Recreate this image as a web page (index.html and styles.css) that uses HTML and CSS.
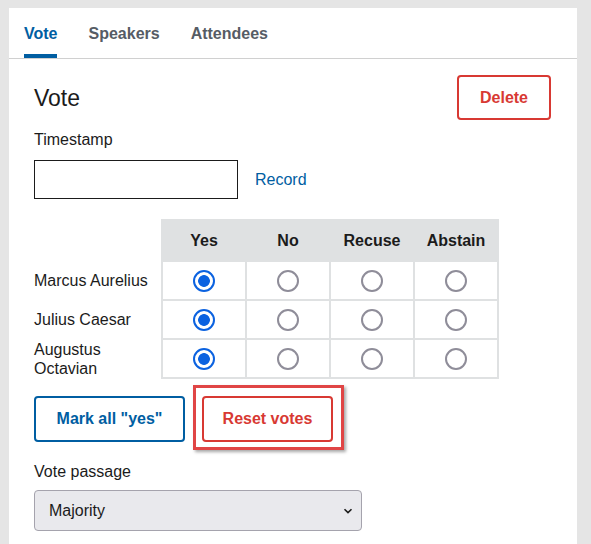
FILE: index.html
```html
<!DOCTYPE html>
<html lang="en">
<head>
<meta charset="utf-8">
<title>Vote</title>
<link rel="stylesheet" href="styles.css">
</head>
<body>
<div class="panel">
  <nav class="tabs">
    <a class="tab active" href="#">Vote</a>
    <a class="tab" href="#">Speakers</a>
    <a class="tab" href="#">Attendees</a>
  </nav>
  <div class="content">
    <div class="head-row">
      <h2 class="title">Vote</h2>
      <button class="btn btn-red btn-delete" type="button">Delete</button>
    </div>
    <label class="label" for="ts">Timestamp</label>
    <div class="ts-row">
      <input class="ts-input" id="ts" type="text">
      <a class="link" href="#">Record</a>
    </div>
    <table class="votes">
      <thead>
        <tr>
          <th class="blank"></th>
          <th class="opt">Yes</th>
          <th class="opt">No</th>
          <th class="opt">Recuse</th>
          <th class="opt">Abstain</th>
        </tr>
      </thead>
      <tbody>
        <tr>
          <td class="name">Marcus Aurelius</td>
          <td class="opt"><input class="radio" type="radio" name="v1" checked></td>
          <td class="opt"><input class="radio" type="radio" name="v1"></td>
          <td class="opt"><input class="radio" type="radio" name="v1"></td>
          <td class="opt"><input class="radio" type="radio" name="v1"></td>
        </tr>
        <tr>
          <td class="name">Julius Caesar</td>
          <td class="opt"><input class="radio" type="radio" name="v2" checked></td>
          <td class="opt"><input class="radio" type="radio" name="v2"></td>
          <td class="opt"><input class="radio" type="radio" name="v2"></td>
          <td class="opt"><input class="radio" type="radio" name="v2"></td>
        </tr>
        <tr>
          <td class="name">Augustus Octavian</td>
          <td class="opt"><input class="radio" type="radio" name="v3" checked></td>
          <td class="opt"><input class="radio" type="radio" name="v3"></td>
          <td class="opt"><input class="radio" type="radio" name="v3"></td>
          <td class="opt"><input class="radio" type="radio" name="v3"></td>
        </tr>
      </tbody>
    </table>
    <div class="btn-row">
      <button class="btn btn-blue btn-mark" type="button">Mark all "yes"</button>
      <span class="highlight-wrap">
        <button class="btn btn-red btn-reset" type="button">Reset votes</button>
        <span class="highlight"></span>
      </span>
    </div>
    <label class="label label-passage" for="passage">Vote passage</label>
    <div class="select-wrap">
      <select class="select" id="passage">
        <option>Majority</option>
      </select>
      <svg class="chev" width="10" height="6" viewBox="0 0 10 6"><path d="M1.5 1.2 L5 4.6 L8.5 1.2" fill="none" stroke="#1b1b1b" stroke-width="1.6"/></svg>
    </div>
  </div>
</div>
</body>
</html>
```

FILE: styles.css
```css
* { box-sizing: border-box; }
html, body { margin: 0; padding: 0; }
body {
  background: #e5e5e5;
  font-family: "Liberation Sans", Arial, sans-serif;
  color: #1b1b1b;
  font-size: 16px;
  padding: 8px 14px 0 9px;
}
.panel {
  background: #fff;
  min-height: 540px;
}
.tabs {
  display: flex;
  gap: 31px;
  padding: 0 15px;
  border-bottom: 1px solid #d0d0d0;
}
.tab {
  display: block;
  padding: 16px 0 10px;
  line-height: 20px;
  font-weight: bold;
  color: #565c65;
  text-decoration: none;
  border-bottom: 4px solid transparent;
}
.tab.active {
  color: #005ea2;
  border-bottom-color: #005ea2;
}
.content {
  padding: 16px 26px 0 25px;
}
.head-row {
  display: flex;
  justify-content: space-between;
  align-items: center;
}
.title {
  margin: 0;
  font-size: 23px;
  font-weight: normal;
  line-height: 28px;
}
.btn {
  font-family: inherit;
  font-size: 16px;
  font-weight: bold;
  line-height: 20px;
  background: #fff;
  border-radius: 4px;
  border: 2px solid;
  height: 46px;
  padding: 0;
  cursor: pointer;
}
.btn-red { color: #d83933; border-color: #d83933; }
.btn-blue { color: #005ea2; border-color: #005ea2; }
.btn-delete { width: 94px; height: 45px; }
.btn-mark { width: 151px; }
.btn-reset { width: 131px; display: block; }
.label {
  display: block;
  line-height: 20px;
  margin-top: 10px;
}
.ts-row {
  display: flex;
  align-items: center;
  gap: 17px;
  margin-top: 10px;
}
.ts-input {
  width: 204px;
  height: 39px;
  border: 1px solid #1b1b1b;
  border-radius: 0;
  font-family: inherit;
  font-size: 16px;
}
.link {
  color: #005ea2;
  text-decoration: none;
  line-height: 20px;
}
.votes {
  border-collapse: collapse;
  margin-top: 20px;
}
.votes th, .votes td { padding: 0; }
.votes th.opt {
  background: #dfe1e2;
  border: 2px solid #dfe1e2;
  width: 84px;
  height: 41px;
  font-weight: bold;
  text-align: center;
  vertical-align: middle;
}
.votes th.blank { width: 128px; }
.votes td.opt {
  border: 2px solid #dfe1e2;
  height: 39px;
  text-align: center;
  vertical-align: middle;
}
.votes td.name {
  line-height: 19px;
  padding-right: 8px;
  vertical-align: middle;
}
.radio {
  appearance: none;
  -webkit-appearance: none;
  display: block;
  margin: 0 auto;
  width: 22px;
  height: 22px;
  border-radius: 50%;
  border: 2px solid #8f8d99;
  background: #fff;
}
.radio:checked {
  border-color: #0b62e0;
  background: radial-gradient(circle, #0b62e0 0 5.5px, #fff 6.2px);
}
.btn-row {
  display: flex;
  gap: 17px;
  margin-top: 17px;
}
.highlight-wrap {
  position: relative;
  display: block;
}
.highlight {
  position: absolute;
  left: -9px;
  top: -11px;
  right: -11px;
  bottom: -8px;
  border: 3px solid #e04545;
  box-shadow: 2px 2px 3px rgba(0, 0, 0, 0.35);
  pointer-events: none;
}
.label-passage { margin-top: 20px; }
.select-wrap {
  position: relative;
  width: 328px;
  margin-top: 8px;
}
.select {
  appearance: none;
  -webkit-appearance: none;
  display: block;
  width: 100%;
  height: 41px;
  background: #e9e9ed;
  border: 1px solid #a5a3ad;
  border-radius: 4px;
  padding: 0 14px;
  font-family: inherit;
  font-size: 16px;
  color: #1b1b1b;
}
.chev {
  position: absolute;
  right: 9px;
  top: 18px;
  pointer-events: none;
}
```
